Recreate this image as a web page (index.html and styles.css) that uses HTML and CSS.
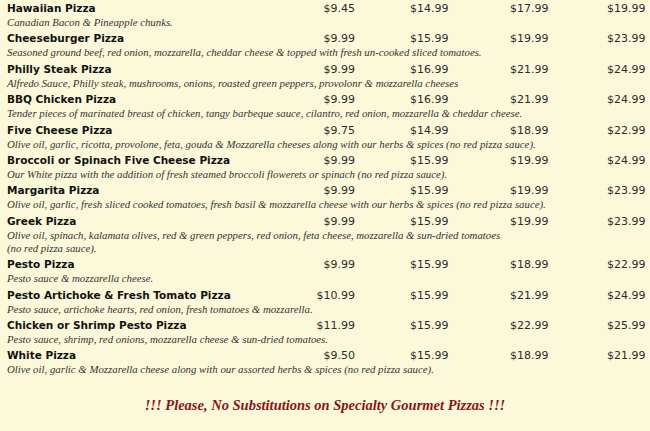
FILE: index.html
```html
<!DOCTYPE html>
<html>
<head>
<meta charset="utf-8">
<link rel="stylesheet" href="styles.css">
</head>
<body>
<div class="menu">
  <div class="item">
    <div class="name">Hawaiian Pizza</div><div class="p pa">$9.45</div><div class="p pb">$14.99</div><div class="p">$17.99</div><div class="p">$19.99</div>
    <div class="desc">Canadian Bacon &amp; Pineapple chunks.</div>
  </div>
  <div class="item">
    <div class="name">Cheeseburger Pizza</div><div class="p pa">$9.99</div><div class="p pb">$15.99</div><div class="p">$19.99</div><div class="p">$23.99</div>
    <div class="desc">Seasoned ground beef, red onion, mozzarella, cheddar cheese &amp; topped with fresh un-cooked sliced tomatoes.</div>
  </div>
  <div class="item">
    <div class="name">Philly Steak Pizza</div><div class="p pa">$9.99</div><div class="p pb">$16.99</div><div class="p">$21.99</div><div class="p">$24.99</div>
    <div class="desc">Alfredo Sauce, Philly steak, mushrooms, onions, roasted green peppers, provolonr &amp; mozzarella cheeses</div>
  </div>
  <div class="item">
    <div class="name">BBQ Chicken Pizza</div><div class="p pa">$9.99</div><div class="p pb">$16.99</div><div class="p">$21.99</div><div class="p">$24.99</div>
    <div class="desc">Tender pieces of marinated breast of chicken, tangy barbeque sauce, cilantro, red onion, mozzarella &amp; cheddar cheese.</div>
  </div>
  <div class="item">
    <div class="name">Five Cheese Pizza</div><div class="p pa">$9.75</div><div class="p pb">$14.99</div><div class="p">$18.99</div><div class="p">$22.99</div>
    <div class="desc">Olive oil, garlic, ricotta, provolone, feta, gouda &amp; Mozzarella cheeses along with our herbs &amp; spices (no red pizza sauce).</div>
  </div>
  <div class="item">
    <div class="name">Broccoli or Spinach Five Cheese Pizza</div><div class="p pa">$9.99</div><div class="p pb">$15.99</div><div class="p">$19.99</div><div class="p">$24.99</div>
    <div class="desc">Our White pizza with the addition of fresh steamed broccoli flowerets or spinach (no red pizza sauce).</div>
  </div>
  <div class="item">
    <div class="name">Margarita Pizza</div><div class="p pa">$9.99</div><div class="p pb">$15.99</div><div class="p">$19.99</div><div class="p">$23.99</div>
    <div class="desc">Olive oil, garlic, fresh sliced cooked tomatoes, fresh basil &amp; mozzarella cheese with our herbs &amp; spices (no red pizza sauce).</div>
  </div>
  <div class="item">
    <div class="name">Greek Pizza</div><div class="p pa">$9.99</div><div class="p pb">$15.99</div><div class="p">$19.99</div><div class="p">$23.99</div>
    <div class="desc">Olive oil, spinach, kalamata olives, red &amp; green peppers, red onion, feta cheese, mozzarella &amp; sun-dried tomatoes<br>(no red pizza sauce).</div>
  </div>
  <div class="item">
    <div class="name">Pesto Pizza</div><div class="p pa">$9.99</div><div class="p pb">$15.99</div><div class="p">$18.99</div><div class="p">$22.99</div>
    <div class="desc">Pesto sauce &amp; mozzarella cheese.</div>
  </div>
  <div class="item">
    <div class="name">Pesto Artichoke &amp; Fresh Tomato Pizza</div><div class="p pa">$10.99</div><div class="p pb">$15.99</div><div class="p">$21.99</div><div class="p">$24.99</div>
    <div class="desc">Pesto sauce, artichoke hearts, red onion, fresh tomatoes &amp; mozzarella.</div>
  </div>
  <div class="item">
    <div class="name">Chicken or Shrimp Pesto Pizza</div><div class="p pa">$11.99</div><div class="p pb">$15.99</div><div class="p">$22.99</div><div class="p">$25.99</div>
    <div class="desc">Pesto sauce, shrimp, red onions, mozzarella cheese &amp; sun-dried tomatoes.</div>
  </div>
  <div class="item">
    <div class="name">White Pizza</div><div class="p pa">$9.50</div><div class="p pb">$15.99</div><div class="p">$18.99</div><div class="p">$21.99</div>
    <div class="desc">Olive oil, garlic &amp; Mozzarella cheese along with our assorted herbs &amp; spices (no red pizza sauce).</div>
  </div>
  <p class="note">!!! Please, No Substitutions on Specialty Gourmet Pizzas !!!</p>
</div>
</body>
</html>
```
FILE: styles.css
```css
html, body {
  margin: 0;
  padding: 0;
  background: #fbf9d9;
}
.menu {
  padding: 1px 0 0 7px;
  width: 650px;
  box-sizing: border-box;
}
.item {
  display: grid;
  grid-template-columns: 300px 48px 155px 97px 1fr;
  margin-bottom: 2.4px;
}
.name {
  font-family: "DejaVu Sans", Verdana, sans-serif;
  font-weight: bold;
  font-size: 10.5px;
  line-height: 15px;
  color: #111;
  white-space: nowrap;
}
.p {
  font-family: "DejaVu Sans", Verdana, sans-serif;
  font-size: 11px;
  line-height: 15px;
  color: #2b2b2b;
  white-space: nowrap;
}
.pa {
  text-align: right;
}
.pb {
  padding-left: 55px;
}
.desc {
  grid-column: 1 / -1;
  font-family: "Liberation Serif", "Times New Roman", serif;
  font-style: italic;
  font-size: 10.8px;
  line-height: 13px;
  color: #333;
}
.note {
  margin: 20px 0 0 -7px;
  text-align: center;
  font-family: "Liberation Serif", "Times New Roman", serif;
  font-style: italic;
  font-weight: bold;
  font-size: 14.5px;
  line-height: 18px;
  color: #8a1414;
}
```
